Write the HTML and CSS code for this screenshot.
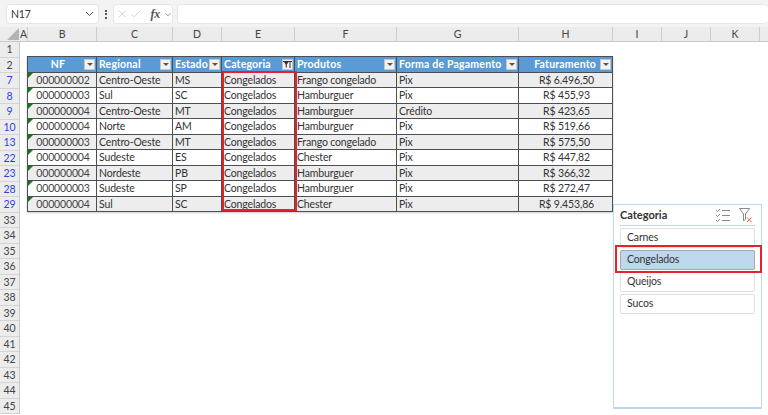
FILE: index.html
```html
<!DOCTYPE html>
<html lang="en">
<head>
    <meta charset="UTF-8">
    <title>Planilha</title>
    <link rel="stylesheet" href="styles.css">
</head>
<body>
    <div class="formulaBar">
        <div class="nameBox"><span>N17</span>
            <svg width="9" height="6" viewBox="0 0 9 6"><path d="M1 1l3.5 3.5L8 1" fill="none" stroke="#555" stroke-width="1"/></svg>
        </div>
        <div class="dots"><i></i><i></i><i></i></div>
        <div class="fxBox">
            <svg width="10" height="10" viewBox="0 0 10 10"><path d="M1 1l8 8M9 1l-8 8" fill="none" stroke="#c8c8c8" stroke-width="1"/></svg>
            <svg width="12" height="10" viewBox="0 0 12 10"><path d="M1 5.5l3 3L11 1" fill="none" stroke="#c8c8c8" stroke-width="1"/></svg>
            <span class="fx">fx</span>
            <svg width="7" height="5" viewBox="0 0 7 5"><path d="M.5 1l3 3 3-3" fill="none" stroke="#777" stroke-width="1"/></svg>
        </div>
        <div class="formulaInput"></div>
    </div>

    <div class="colHeaders">
        <div class="corner"><svg width="12" height="12" viewBox="0 0 12 12"><path d="M12 0v12H0z" fill="#b4b4b4"/></svg></div>
        <div class="colHead colA">A</div>
        <div class="colHead colB">B</div>
        <div class="colHead colC">C</div>
        <div class="colHead colD">D</div>
        <div class="colHead colE">E</div>
        <div class="colHead colF">F</div>
        <div class="colHead colG">G</div>
        <div class="colHead colH">H</div>
        <div class="colHead colI">I</div>
        <div class="colHead colI">J</div>
        <div class="colHead colI">K</div>
        <div class="colHead colL"></div>
    </div>

    <div class="sheet">
        <div class="rowHeaders">
            <div>1</div><div>2</div>
            <div class="on">7</div><div class="on">8</div><div class="on">9</div><div class="on">10</div><div class="on">13</div>
            <div class="on">22</div><div class="on">23</div><div class="on">28</div><div class="on">29</div>
            <div>33</div><div>34</div><div>35</div><div>36</div><div>37</div><div>38</div><div>39</div>
            <div>40</div><div>41</div><div>42</div><div>43</div><div>44</div><div>45</div>
        </div>
        <div class="cells">
            <div class="table">
                <div class="th center">NF<b class="drop"></b></div>
                <div class="th">Regional<b class="drop"></b></div>
                <div class="th">Estado<b class="drop"></b></div>
                <div class="th">Categoria<b class="drop filtered"><svg width="9" height="7" viewBox="0 0 9 7"><path d="M0 .5h9" stroke="#333" stroke-width="1"/><path d="M1 1h4.500L3.800 3.400V6.500H2.700V3.400z" fill="#333"/><path d="M7 1v6" stroke="#333" stroke-width="1"/></svg></b></div>
                <div class="th">Produtos<b class="drop"></b></div>
                <div class="th">Forma de Pagamento<b class="drop"></b></div>
                <div class="th right">Faturamento<b class="drop"></b></div>

                <div class="td nf alt">000000002</div><div class="td alt">Centro-Oeste</div><div class="td alt">MS</div><div class="td alt">Congelados</div><div class="td alt">Frango congelado</div><div class="td alt">Pix</div><div class="td center alt">R$ 6.496,50</div>
                <div class="td nf">000000003</div><div class="td">Sul</div><div class="td">SC</div><div class="td">Congelados</div><div class="td">Hamburguer</div><div class="td">Pix</div><div class="td center">R$ 455,93</div>
                <div class="td nf alt">000000004</div><div class="td alt">Centro-Oeste</div><div class="td alt">MT</div><div class="td alt">Congelados</div><div class="td alt">Hamburguer</div><div class="td alt">Crédito</div><div class="td center alt">R$ 423,65</div>
                <div class="td nf">000000004</div><div class="td">Norte</div><div class="td">AM</div><div class="td">Congelados</div><div class="td">Hamburguer</div><div class="td">Pix</div><div class="td center">R$ 519,66</div>
                <div class="td nf alt">000000003</div><div class="td alt">Centro-Oeste</div><div class="td alt">MT</div><div class="td alt">Congelados</div><div class="td alt">Frango congelado</div><div class="td alt">Pix</div><div class="td center alt">R$ 575,50</div>
                <div class="td nf">000000004</div><div class="td">Sudeste</div><div class="td">ES</div><div class="td">Congelados</div><div class="td">Chester</div><div class="td">Pix</div><div class="td center">R$ 447,82</div>
                <div class="td nf alt">000000004</div><div class="td alt">Nordeste</div><div class="td alt">PB</div><div class="td alt">Congelados</div><div class="td alt">Hamburguer</div><div class="td alt">Pix</div><div class="td center alt">R$ 366,32</div>
                <div class="td nf">000000003</div><div class="td">Sudeste</div><div class="td">SP</div><div class="td">Congelados</div><div class="td">Hamburguer</div><div class="td">Pix</div><div class="td center">R$ 272,47</div>
                <div class="td nf alt">000000004</div><div class="td alt">Sul</div><div class="td alt">SC</div><div class="td alt">Congelados</div><div class="td alt">Chester</div><div class="td alt">Pix</div><div class="td center alt">R$ 9.453,86</div>

                <div class="redColumn"></div>
            </div>
        </div>
    </div>

    <div class="slicer">
        <div class="slicerHead">
            <span>Categoria</span>
            <svg class="multi" width="14" height="14" viewBox="0 0 14 14"><path d="M0 2l1.500 1.500L4 1M0 7l1.500 1.500L4 6M0 12l1.500 1.500L4 11" fill="none" stroke="#8a8a8a" stroke-width="1"/><path d="M6 2.500h8M6 7.500h8M6 12.500h8" stroke="#8a8a8a" stroke-width="1"/></svg>
            <svg class="clear" width="13" height="15" viewBox="0 0 13 15"><path d="M.5.5h10L6.500 6v5L4.500 13V6z" fill="none" stroke="#8a8a8a" stroke-width="1"/><path d="M8 9.500l4.500 4.500M12.500 9.500L8 14" stroke="#e0604a" stroke-width="1"/></svg>
        </div>
        <div class="slicerItem">Carnes</div>
        <div class="slicerItem picked">Congelados</div>
        <div class="slicerItem">Queijos</div>
        <div class="slicerItem">Sucos</div>
    </div>
    <div class="redItem"></div>
</body>
</html>
```

FILE: styles.css
```css
html, body {
    margin: 0;
    height: 415px;
    overflow: hidden;
}
body {
    background: white;
    font-family: "Lato", "Liberation Sans", sans-serif;
    font-size: 10.5px;
    letter-spacing: -.15px;
    color: #333;
    position: relative;
}

/* formula bar */
.formulaBar {
    height: 27px;
    box-sizing: border-box;
    padding: 4px 0 3px 6px;
    background: #f3f3f3;
    display: flex;
    align-items: stretch;
}
.nameBox, .fxBox, .formulaInput {
    background: white;
    border: 1px solid #e6e6e6;
    border-radius: 4px;
    box-sizing: border-box;
    display: flex;
    align-items: center;
}
.nameBox {
    width: 93px;
    padding: 0 4px;
    justify-content: space-between;
}
.dots {
    margin: 0 6px;
    display: flex;
    flex-direction: column;
    justify-content: center;
    gap: 1.5px;
}
.dots i {
    width: 2px;
    height: 2px;
    background: #555;
}
.fxBox {
    width: 60px;
    padding: 0 1px 0 4px;
    gap: 5px;
}
.fx {
    font-family: "Liberation Serif", serif;
    font-style: italic;
    font-weight: bold;
    font-size: 12px;
    color: #555;
    margin-left: 4px;
}
.formulaInput {
    flex: 1;
    margin-left: 4px;
    border-right: 0;
}

/* column headers */
.colHeaders {
    display: flex;
    height: 14px;
    background: #ececec;
    border-bottom: 1px solid #c8c8c8;
    color: #444;
}
.corner {
    width: 20px;
    display: flex;
    justify-content: flex-end;
    align-items: flex-end;
    padding: 0 1px 1px 0;
    box-sizing: border-box;
}
.colHead {
    box-sizing: border-box;
    border-right: 1px solid #cfcfcf;
    text-align: center;
    line-height: 15px;
}
.colA { width: 8px; }
.colB { width: 69px; }
.colC { width: 76px; }
.colD { width: 49px; }
.colE { width: 73px; }
.colF { width: 102px; }
.colG { width: 122px; }
.colH { width: 94px; }
.colI { width: 49px; }
.colL { width: 8px; border-right: 0; }

/* sheet */
.sheet {
    display: flex;
}
.rowHeaders {
    width: 20px;
    background: #ececec;
    border-right: 1px solid #c8c8c8;
    box-sizing: border-box;
}
.rowHeaders div {
    height: 15.5px;
    line-height: 15px;
    box-sizing: border-box;
    border-bottom: 1px solid #d4d4d4;
    text-align: center;
    color: #444;
}
.rowHeaders .on {
    color: #2f3fe0;
}
.cells {
    padding: 14px 0 0 8px;
}
.table {
    display: grid;
    grid-template-columns: 69px 76px 49px 73px 102px 122px 94px;
    grid-auto-rows: 15.5px;
    border-top: 1px solid #4a4f57;
    border-left: 1px solid #4a4f57;
    margin-left: -1px;
    position: relative;
    box-shadow: 0 1px 2px #ccc;
}
.th, .td {
    box-sizing: border-box;
    border-right: 1px solid #4a4f57;
    border-bottom: 1px solid #4a4f57;
    padding-left: 2px;
    line-height: 14px;
    white-space: nowrap;
    position: relative;
}
.th {
    background: #5b9bd5;
    color: white;
    font-weight: bold;
    letter-spacing: .2px;
}
.th.center {
    text-align: center;
    padding-right: 10px;
}
.th.right {
    text-align: right;
    padding-right: 16px;
}
.td.center {
    text-align: center;
}
.td.alt {
    background: #ededed;
}
.td.nf {
    text-align: center;
    color: #444;
}
/* green "number stored as text" corner */
.td.nf::before {
    content: "";
    position: absolute;
    left: 0;
    top: 0;
    border-top: 5px solid #107c10;
    border-right: 5px solid transparent;
}
.drop {
    position: absolute;
    right: 1px;
    top: 2px;
    width: 11px;
    height: 11px;
    background: #f2f2f2;
    border: 1px solid #c6c6c6;
    box-sizing: border-box;
    display: flex;
    align-items: center;
    justify-content: center;
}
.drop::after {
    content: "";
    border-top: 3px solid #555;
    border-left: 3px solid transparent;
    border-right: 3px solid transparent;
}
.drop.filtered::after {
    display: none;
}
.redColumn {
    position: absolute;
    left: 194px;
    top: 14px;
    width: 75px;
    height: 140px;
    box-sizing: border-box;
    border: 2px solid #e8202a;
}

/* slicer */
.slicer {
    position: absolute;
    left: 613px;
    top: 204px;
    width: 149px;
    height: 205px;
    box-sizing: border-box;
    background: white;
    border: solid #bdd7ee;
    border-width: 1px 1px 2px 1px;
    padding: 0 6px;
}
.slicerHead {
    display: flex;
    align-items: center;
    height: 20px;
    border-bottom: 1px solid #bdd7ee;
    margin-bottom: 2px;
    font-weight: bold;
    font-size: 11px;
    letter-spacing: 0;
    line-height: 18px;
}
.slicerHead span {
    flex: 1;
}
.multi {
    margin-right: 9px;
}
.clear {
    margin-right: 3px;
}
.slicerItem {
    height: 20px;
    line-height: 17px;
    margin-bottom: 2px;
    box-sizing: border-box;
    border: 1px solid #e0e0e0;
    border-radius: 2px;
    padding-left: 6px;
    background: white;
}
.slicerItem.picked {
    background: #bdd7ee;
    border-color: #a8a8a8;
}
.redItem {
    position: absolute;
    left: 615px;
    top: 245px;
    width: 147px;
    height: 28px;
    box-sizing: border-box;
    border: 2px solid #e8202a;
}
```
